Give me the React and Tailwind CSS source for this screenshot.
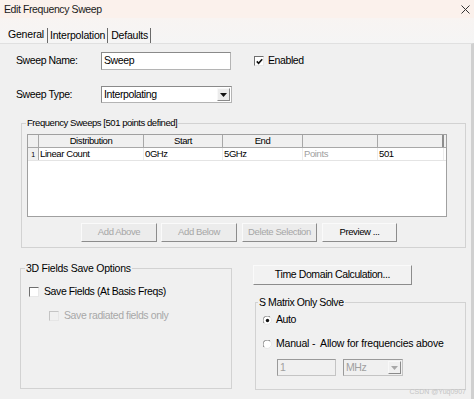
import React from 'react';

function Check({ checked, disabled, className = '' }) {
  return (
    <span
      className={`flex h-[10px] w-[10px] shrink-0 items-center justify-center border ${
        disabled
          ? 'border-[#c4c4c4] border-r-[#e6e6e6] border-b-[#e6e6e6] bg-[#f0f0f0]'
          : 'border-[#6f6f6f] border-r-[#e8e8e8] border-b-[#e8e8e8] bg-white'
      } ${className}`}
    >
      {checked && (
        <svg width="7" height="7" viewBox="0 0 7 7">
          <polyline points="0.8,3.4 2.6,5.3 6.2,1.2" fill="none" stroke="#111" strokeWidth="1.6" />
        </svg>
      )}
    </span>
  );
}

function Radio({ checked, className = '' }) {
  return (
    <svg width="9" height="9" viewBox="0 0 9 9" className={`shrink-0 ${className}`}>
      <circle cx="4.5" cy="4.5" r="4" fill="#fff" />
      <path d="M1.2 7.2 A4 4 0 0 1 7.2 1.2" fill="none" stroke="#7a7a7a" strokeWidth="1" />
      <path d="M7.2 1.2 A4 4 0 0 1 1.2 7.2" fill="none" stroke="#e4e4e4" strokeWidth="1" />
      {checked && <circle cx="4.5" cy="4.5" r="1.7" fill="#111" />}
    </svg>
  );
}

function Arrow({ disabled }) {
  return (
    <span
      className={`flex h-[13px] w-[13px] items-center justify-center border border-[#f8f8f8] border-r-[#8a8a8a] border-b-[#8a8a8a] ${
        disabled ? 'bg-[#f0f0f0]' : 'bg-[#ececec]'
      }`}
    >
      <svg width="7" height="4" viewBox="0 0 7 4">
        <polygon points="0,0 7,0 3.5,4" fill={disabled ? '#a8a8a8' : '#111'} />
      </svg>
    </span>
  );
}

function Btn({ children, disabled, w }) {
  return (
    <div
      className={`flex h-[19px] items-center justify-center whitespace-nowrap border border-[#fafafa] border-r-[#8c8c8c] border-b-[#8c8c8c] text-[9.5px] tracking-[-0.4px] ${w} ${
        disabled ? 'bg-[#ececec] text-[#a6a6a6]' : 'bg-[#f2f2f2] text-black'
      }`}
    >
      {children}
    </div>
  );
}

const cols = [
  { label: '', w: 'w-[11px]' },
  { label: 'Distribution', w: 'w-[105px]' },
  { label: 'Start', w: 'w-[79px]' },
  { label: 'End', w: 'w-[80px]' },
  { label: '', w: 'w-[75px]' },
  { label: '', w: 'w-[66px]' },
];

function SweepTable() {
  const row = ['1', 'Linear Count', '0GHz', '5GHz', 'Points', '501'];
  return (
    <div className="ml-[5px] mt-[4px] flex h-[83px] w-[420px] flex-col border border-[#a0a0a0] bg-white text-[9.5px] tracking-[-0.4px]">
      <div className="flex h-[13px] border-b border-[#a8a8a8] bg-[#f0f0f0]">
        {cols.map((c, i) => (
          <div
            key={i}
            className={`flex items-center justify-center border-r border-[#a8a8a8] leading-none ${c.w} ${
              i === cols.length - 1 ? 'border-r-2 border-r-[#8e8e8e]' : ''
            }`}
          >
            {c.label}
          </div>
        ))}
      </div>
      <div className="flex h-[13px] border-b border-[#e4e4e4]">
        {row.map((t, i) => (
          <div
            key={i}
            className={`flex items-center border-r leading-none ${cols[i].w} ${
              i === 0
                ? 'justify-center border-[#a8a8a8] bg-[#f0f0f0] text-[7px]'
                : 'border-[#ececec] pl-[1px]'
            } ${i === 4 ? 'text-[#a0a0a0]' : ''}`}
          >
            {t}
          </div>
        ))}
      </div>
    </div>
  );
}

export default function App() {
  return (
    <div className="relative flex h-[399px] w-[474px] flex-col overflow-hidden bg-[#f0f0f0] font-['Liberation_Sans',sans-serif] text-[10.5px] tracking-[-0.4px] text-black">
      {/* title bar */}
      <div className="flex h-[18px] items-center justify-between bg-[#fbf1ec] pl-[4px] pr-[4px]">
        <span className="leading-none text-[#1a1a1a]">Edit Frequency Sweep</span>
        <svg width="9" height="9" viewBox="0 0 9 9">
          <path d="M0.5 0.5 L8.5 8.5 M8.5 0.5 L0.5 8.5" stroke="#333" strokeWidth="1" />
        </svg>
      </div>

      {/* tabs */}
      <div className="flex h-[25px] items-end bg-linear-to-b from-[#f8f4f2] to-[#f5f5f5] pl-[7px] tracking-[-0.2px]">
        <div className="flex h-[15px] items-center border-r border-[#6a6a6a] pl-[1px] pr-[3px] pb-[2px]">General</div>
        <div className="flex h-[15px] items-center border-r border-[#6a6a6a] pl-[2px] pr-[2px]">Interpolation</div>
        <div className="flex h-[15px] items-center border-r border-[#6a6a6a] pl-[3px] pr-[2px]">Defaults</div>
      </div>

      {/* page */}
      <div className="flex flex-1 flex-col border-t border-[#e0e0e0] border-r-[3px] border-r-[#d0d0d0]">
        <div className="mt-[8px] flex h-[18px] items-center">
          <span className="ml-[16px] w-[85px]">Sweep Name:</span>
          <div className="flex h-[18px] w-[130px] items-center border border-[#b4b4b4] border-t-[#8a8a8a] border-l-[#8a8a8a] bg-white pl-[2px]">
            Sweep
          </div>
          <Check checked className="ml-[23px]" />
          <span className="ml-[4px]">Enabled</span>
        </div>

        <div className="mt-[16px] flex h-[17px] items-center">
          <span className="ml-[16px] w-[85px]">Sweep Type:</span>
          <div className="flex h-[17px] w-[131px] items-center justify-between border border-[#b4b4b4] border-t-[#8a8a8a] border-l-[#8a8a8a] bg-white pl-[2px] pr-[1px]">
            <span>Interpolating</span>
            <Arrow />
          </div>
        </div>

        <fieldset className="ml-[21px] mt-[13px] h-[132px] w-[445px] border border-[#d2d2d2]">
          <legend className="ml-[4px] px-[1px] text-[9.5px] leading-[14px] tracking-[-0.45px]">
            Frequency Sweeps [501 points defined]
          </legend>
          <SweepTable />
          <div className="ml-[59px] mt-[6px] flex">
            <Btn disabled w="w-[76px]">Add Above</Btn>
            <div className="ml-[4px]">
              <Btn disabled w="w-[76px]">Add Below</Btn>
            </div>
            <div className="ml-[5px]">
              <Btn disabled w="w-[75px]">Delete Selection</Btn>
            </div>
            <div className="ml-[5px]">
              <Btn w="w-[75px]">Preview ...</Btn>
            </div>
          </div>
        </fieldset>

        <div className="mt-[13px] flex items-start">
          <fieldset className="ml-[20px] h-[128px] w-[212px] shrink-0 border border-[#d2d2d2]">
            <legend className="ml-[4px] px-[1px] leading-[14px] tracking-[-0.25px]">3D Fields Save Options</legend>
            <div className="mt-[10px] flex h-[14px] items-center">
              <Check className="ml-[8px]" />
              <span className="ml-[5px]">Save Fields (At Basis Freqs)</span>
            </div>
            <div className="mt-[10px] flex h-[14px] items-center">
              <Check disabled className="ml-[28px]" />
              <span className="ml-[5px] text-[#a8a8a8]">Save radiated fields only</span>
            </div>
          </fieldset>

          <div className="ml-[21px] flex flex-col">
            <div className="mt-[4px] flex h-[20px] w-[159px] items-center justify-center whitespace-nowrap border border-[#fafafa] border-r-[#8c8c8c] border-b-[#8c8c8c] bg-[#f2f2f2]">
              Time Domain Calculation...
            </div>
            <fieldset className="ml-[2px] mt-[10px] h-[95px] w-[211px] border border-[#d2d2d2]">
              <legend className="ml-[2px] px-[1px] leading-[14px]">S Matrix Only Solve</legend>
              <div className="mt-[4px] flex h-[14px] items-center">
                <Radio checked className="ml-[7px]" />
                <span className="ml-[4px]">Auto</span>
              </div>
              <div className="mt-[10px] flex h-[14px] items-center">
                <Radio className="ml-[7px]" />
                <span className="ml-[4px] whitespace-pre tracking-[-0.2px]">Manual -  Allow for frequencies above</span>
              </div>
              <div className="mt-[8px] flex items-center">
                <div className="ml-[21px] flex h-[17px] w-[59px] items-center border border-[#c4c4c4] border-t-[#9a9a9a] border-l-[#9a9a9a] bg-[#f0f0f0] pl-[2px] text-[#a0a0a0]">
                  1
                </div>
                <div className="ml-[7px] flex h-[17px] w-[60px] items-center justify-between border border-[#c4c4c4] border-t-[#9a9a9a] border-l-[#9a9a9a] bg-[#f0f0f0] pl-[2px] pr-[1px] text-[#a0a0a0]">
                  <span>MHz</span>
                  <Arrow disabled />
                </div>
              </div>
            </fieldset>
          </div>
        </div>
      </div>

      <span className="absolute bottom-[4px] right-[8px] text-[7px] leading-none tracking-normal text-[#c4c4c4]">CSDN @Yuq0907</span>
    </div>
  );
}
